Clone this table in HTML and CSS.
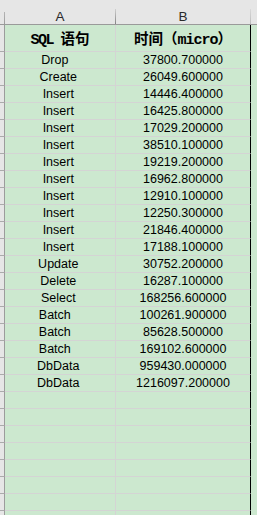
FILE: index.html
```html
<!DOCTYPE html>
<html lang="zh">
<head>
<meta charset="utf-8">
<title>Sheet</title>
<link rel="stylesheet" href="styles.css">
</head>
<body>
<div class="sheet">
  <div class="colhead">
    <div class="corner"></div>
    <div class="ch">A</div>
    <div class="ch chb">B</div>
    <div class="chtail"></div>
  </div>
  <div class="row row-title">
    <div class="rh"></div>
    <div class="ca title"><span class="lat">SQL </span><span class="cjk">语句</span></div>
    <div class="cb title"><span class="cjk">时间（</span><span class="lat mono2">micro</span><span class="cjk">）</span></div>
    <div class="tail"></div>
  </div>
  <div class="row"><div class="rh"></div><div class="ca">Drop   </div><div class="cb">37800.700000</div><div class="tail"></div></div>
  <div class="row"><div class="rh"></div><div class="ca">Create </div><div class="cb">26049.600000</div><div class="tail"></div></div>
  <div class="row"><div class="rh"></div><div class="ca">Insert </div><div class="cb">14446.400000</div><div class="tail"></div></div>
  <div class="row"><div class="rh"></div><div class="ca">Insert </div><div class="cb">16425.800000</div><div class="tail"></div></div>
  <div class="row"><div class="rh"></div><div class="ca">Insert </div><div class="cb">17029.200000</div><div class="tail"></div></div>
  <div class="row"><div class="rh"></div><div class="ca">Insert </div><div class="cb">38510.100000</div><div class="tail"></div></div>
  <div class="row"><div class="rh"></div><div class="ca">Insert </div><div class="cb">19219.200000</div><div class="tail"></div></div>
  <div class="row"><div class="rh"></div><div class="ca">Insert </div><div class="cb">16962.800000</div><div class="tail"></div></div>
  <div class="row"><div class="rh"></div><div class="ca">Insert </div><div class="cb">12910.100000</div><div class="tail"></div></div>
  <div class="row"><div class="rh"></div><div class="ca">Insert </div><div class="cb">12250.300000</div><div class="tail"></div></div>
  <div class="row"><div class="rh"></div><div class="ca">Insert </div><div class="cb">21846.400000</div><div class="tail"></div></div>
  <div class="row"><div class="rh"></div><div class="ca">Insert </div><div class="cb">17188.100000</div><div class="tail"></div></div>
  <div class="row"><div class="rh"></div><div class="ca">Update </div><div class="cb">30752.200000</div><div class="tail"></div></div>
  <div class="row"><div class="rh"></div><div class="ca">Delete </div><div class="cb">16287.100000</div><div class="tail"></div></div>
  <div class="row"><div class="rh"></div><div class="ca">Select </div><div class="cb">168256.600000</div><div class="tail"></div></div>
  <div class="row"><div class="rh"></div><div class="ca">Batch   </div><div class="cb">100261.900000</div><div class="tail"></div></div>
  <div class="row"><div class="rh"></div><div class="ca">Batch   </div><div class="cb">85628.500000</div><div class="tail"></div></div>
  <div class="row"><div class="rh"></div><div class="ca">Batch   </div><div class="cb">169102.600000</div><div class="tail"></div></div>
  <div class="row"><div class="rh"></div><div class="ca">DbData </div><div class="cb">959430.000000</div><div class="tail"></div></div>
  <div class="row"><div class="rh"></div><div class="ca">DbData </div><div class="cb">1216097.200000</div><div class="tail"></div></div>
  <div class="row"><div class="rh"></div><div class="ca"></div><div class="cb"></div><div class="tail"></div></div>
  <div class="row"><div class="rh"></div><div class="ca"></div><div class="cb"></div><div class="tail"></div></div>
  <div class="row"><div class="rh"></div><div class="ca"></div><div class="cb"></div><div class="tail"></div></div>
  <div class="row"><div class="rh"></div><div class="ca"></div><div class="cb"></div><div class="tail"></div></div>
  <div class="row"><div class="rh"></div><div class="ca"></div><div class="cb"></div><div class="tail"></div></div>
  <div class="row"><div class="rh"></div><div class="ca"></div><div class="cb"></div><div class="tail"></div></div>
  <div class="row"><div class="rh"></div><div class="ca"></div><div class="cb"></div><div class="tail"></div></div>
  <div class="row"><div class="rh"></div><div class="ca"></div><div class="cb"></div><div class="tail"></div></div>
</div>
</body>
</html>
```
FILE: styles.css
```css
html, body {
  margin: 0;
  padding: 0;
  height: 515px;
  overflow: hidden;
  background: #cce8cf;
}

.sheet {
  width: 257px;
  font-family: "Liberation Sans", Arial, sans-serif;
  font-size: 12.5px;
  color: #000;
}

.colhead {
  display: grid;
  grid-template-columns: 5px 111px 135px 6px;
  height: 25px;
  box-sizing: border-box;
  background: #e6e6e6;
  border-bottom: 1px solid #9a9a9a;
}

.corner {
  border-right: 1px solid;
  border-image: linear-gradient(to bottom, rgba(0,0,0,0) 0 12px, #b4b4b4 12px, #9a9a9a 100%) 1;
}

.ch {
  font-family: "Liberation Sans", Arial, sans-serif;
  font-size: 13.5px;
  line-height: 14px;
  padding-top: 10px;
  text-align: center;
  color: #2a2a2a;
  border-right: 1px solid;
  border-image: linear-gradient(to bottom, rgba(0,0,0,0) 0 9px, #d0d0d0 9px, #7e7e7e 100%) 1;
}

.chb {
  border-image: linear-gradient(to bottom, rgba(0,0,0,0) 0 9px, #dadada 9px, #b8b8b8 100%) 1;
}

.row {
  display: grid;
  grid-template-columns: 5px 111px 135px 6px;
  height: 17px;
}

.row-title {
  height: 27px;
}

.rh {
  background: #e6e6e6;
  border-right: 1px solid #9c9c9c;
  border-bottom: 1px solid #ababab;
}

.ca, .cb {
  white-space: pre;
  text-align: center;
  line-height: 15px;
  padding-top: 1px;
  border-bottom: 1px solid #d4d4d4;
  overflow: hidden;
}

.ca {
  border-right: 1px solid #d4d4d4;
}

.cb {
  border-right: 1px solid #000;
}

.title {
  padding-top: 0;
  line-height: 26px;
  font-weight: bold;
  font-size: 15px;
}

.lat {
  font-family: "Liberation Mono", "DejaVu Sans Mono", monospace;
  font-weight: bold;
  font-size: 15px;
  letter-spacing: -1.5px;
}

.cjk {
  font-family: "Noto Sans CJK SC", "Noto Sans CJK JP", sans-serif;
  font-weight: bold;
  font-size: 14.5px;
}

.mono2 {
  letter-spacing: -1px;
}

.tail {
  background: #cce8cf;
}
```
